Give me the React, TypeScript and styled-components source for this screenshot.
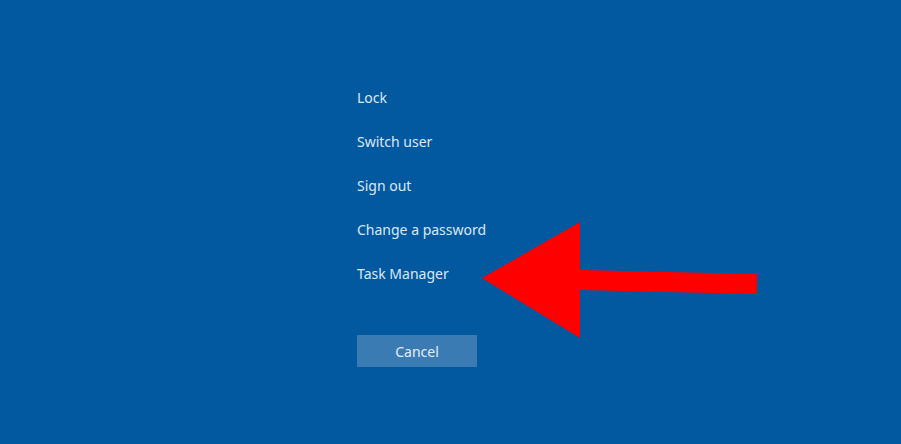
import styled, { createGlobalStyle } from 'styled-components';

const GlobalStyle = createGlobalStyle`
  html, body {
    margin: 0;
    padding: 0;
    background: #0359a0;
  }
  #root {
    min-height: 100vh;
  }
`;

const options = ['Lock', 'Switch user', 'Sign out', 'Change a password', 'Task Manager'];

const App = () => {
  return (
    <>
      <GlobalStyle />
      <Screen>
        <Menu>
          <OptionList>
            {options.map((label) => (
              <Option key={label}>{label}</Option>
            ))}
          </OptionList>
          <CancelButton>Cancel</CancelButton>
        </Menu>
        <Arrow viewBox="0 0 901 444" width="901" height="444">
          <polygon
            points="482,278 580,222 580,270 757,274 757,294 580,290 580,338"
            fill="#ff0000"
          />
        </Arrow>
      </Screen>
    </>
  );
};

const Screen = styled.div`
  position: relative;
  width: 901px;
  height: 444px;
  background: #0359a0;
  overflow: hidden;
  font-family: 'Noto Sans', 'Open Sans', sans-serif;
`;

const Menu = styled.div`
  display: flex;
  flex-direction: column;
  align-items: flex-start;
  padding: 88px 0 0 357px;
`;

const OptionList = styled.ul`
  list-style: none;
  margin: 0;
  padding: 0;
  display: flex;
  flex-direction: column;
  gap: 24px;
`;

const Option = styled.li`
  color: #dde8f3;
  font-size: 14px;
  line-height: 20px;
  height: 20px;
`;

const CancelButton = styled.button`
  margin-top: 51px;
  width: 120px;
  height: 32px;
  border: none;
  padding: 0;
  background: #3b7bb4;
  color: #e4edf6;
  font-family: inherit;
  font-size: 14px;
`;

const Arrow = styled.svg`
  position: absolute;
  left: 0;
  top: 0;
  pointer-events: none;
`;

export default App;
